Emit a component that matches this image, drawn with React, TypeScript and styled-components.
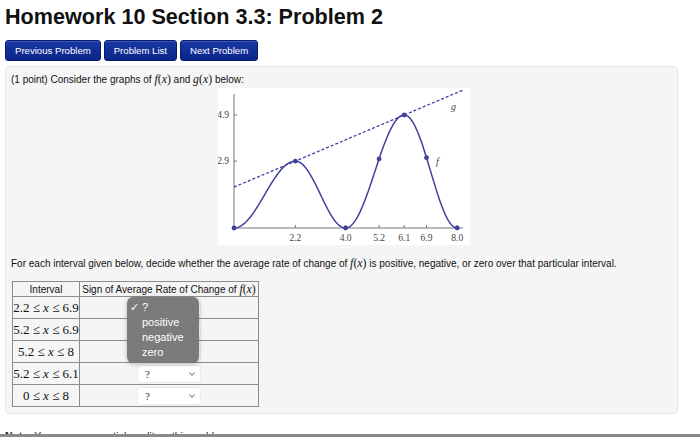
import React from 'react'
import styled, { createGlobalStyle } from 'styled-components'
import { ChevronDown } from 'lucide-react'

const GlobalStyle = createGlobalStyle`
	html, body {
		margin: 0;
		padding: 0;
		background: #ffffff;
		font-family: "Liberation Sans", Helvetica, Arial, sans-serif;
		color: #111;
		overflow: hidden;
	}
`

const Page = styled.div`
	padding: 3px 5px 0 5px;
	width: 673px;
`

const Title = styled.h1`
	margin: 0;
	font-size: 21.6px;
	line-height: 27px;
	font-weight: bold;
	color: #111;
`

const NavBar = styled.div`
	display: flex;
	gap: 3px;
	margin-top: 10px;
`

const NavButton = styled.button`
	height: 21px;
	padding: 0 9px;
	border: 1px solid #061b6e;
	border-radius: 3px;
	background: linear-gradient(to bottom, #1a38a4, #0a2589);
	color: #fff;
	font-family: "Liberation Sans", Helvetica, Arial, sans-serif;
	font-size: 9.6px;
	line-height: 19px;
	box-shadow: inset 0 1px 0 rgba(255, 255, 255, 0.15);
`

const ProblemBox = styled.div`
	margin-top: 5px;
	background: #f5f5f5;
	border: 1px solid #e6e6e6;
	border-radius: 4px;
	padding: 5px 6px 6px 5px;
`

const Para = styled.p<{ $gap?: number }>`
	margin: ${(p) => p.$gap ?? 0}px 0 0 0;
	font-size: 10px;
	line-height: 14px;
`

const M = styled.span`
	font-family: "Liberation Serif", "Times New Roman", serif;
	font-size: 1.18em;
`

const I = styled.i`
	font-style: italic;
`

const GraphWrap = styled.div`
	display: flex;
	justify-content: center;
	padding-left: 5px;
	margin-top: 1px;
`

const TableWrap = styled.div`
	position: relative;
	margin-top: 10px;
	margin-left: 1px;
	width: 247px;
`

const Table = styled.table`
	border-collapse: collapse;
	width: 247px;
	font-size: 10px;
`

const HeadCell = styled.th`
	border: 1px solid #8c8c8c;
	height: 14px;
	padding: 0 1px;
	font-weight: normal;
	text-align: center;
	white-space: nowrap;
	line-height: 13px;
`

const IntervalCell = styled.td`
	border: 1px solid #8c8c8c;
	height: 21px;
	width: 66px;
	padding: 0;
	text-align: center;
	white-space: nowrap;
	font-family: "Liberation Serif", "Times New Roman", serif;
	font-size: 13px;
`

const AnswerCell = styled.td`
	border: 1px solid #8c8c8c;
	height: 21px;
	padding: 0;
`

const SelectBox = styled.div`
	width: 64px;
	height: 18px;
	margin: 0 auto;
	box-sizing: border-box;
	background: #fff;
	border: 1px solid #eaeaea;
	border-radius: 3px;
	display: flex;
	align-items: center;
	justify-content: space-between;
	padding: 0 3px 0 7px;
	font-family: "Liberation Serif", "Times New Roman", serif;
	font-size: 11px;
	color: #333;
`

const Menu = styled.div`
	position: absolute;
	left: 115px;
	top: 16px;
	width: 72px;
	height: 66px;
	box-sizing: border-box;
	padding: 3px 0 0 3px;
	background: rgba(118, 118, 118, 0.96);
	border-radius: 6px;
	box-shadow: 0 1px 4px rgba(0, 0, 0, 0.25);
	color: #fff;
	font-size: 11px;
`

const MenuItem = styled.div<{ $checked?: boolean }>`
	display: flex;
	height: 15px;
	line-height: 15px;
	padding-left: ${(p) => (p.$checked ? 0 : 12)}px;
	gap: 3px;
`

const Note = styled.p`
	margin: 16px 0 0 0;
	font-size: 10.4px;
	line-height: 14px;
	color: #222;
`

const BottomBar = styled.div`
	position: fixed;
	left: 0;
	right: 0;
	bottom: 0;
	height: 3px;
	background: #8a8a8a;
`

const X0 = 16
const Y0 = 140
const SX = 27.9
const SY = 23.06
const PURPLE = '#41409e'

const f = (x: number) => {
	if (x <= 2.2) return (2.9 * (1 - Math.cos((Math.PI * x) / 2.2))) / 2
	if (x <= 4) return (2.9 * (1 + Math.cos((Math.PI * (x - 2.2)) / 1.8))) / 2
	if (x <= 6.1) return (4.9 * (1 - Math.cos((Math.PI * (x - 4)) / 2.1))) / 2
	return (4.9 * (1 + Math.cos((Math.PI * (x - 6.1)) / 1.9))) / 2
}
const g = (x: number) => 2.9 + ((x - 2.2) * 2) / 3.9
const px = (x: number) => X0 + x * SX
const py = (y: number) => Y0 - y * SY

const Graph = () => {
	const pts: string[] = []
	for (let i = 0; i <= 320; i++) {
		const x = (8 * i) / 320
		pts.push(`${px(x).toFixed(2)},${py(f(x)).toFixed(2)}`)
	}
	const xTicks = ['2.2', '4.0', '5.2', '6.1', '6.9', '8.0']
	const dots = [0, 2.2, 4, 5.2, 6.1, 6.9, 8]
	return (
		<svg width="252" height="157" viewBox="0 0 252 157" style={{ background: '#fff', display: 'block' }}>
			<line x1={X0} y1={6} x2={X0} y2={Y0} stroke="#777" strokeWidth="1" />
			<line x1={X0} y1={Y0} x2={245} y2={Y0} stroke="#777" strokeWidth="1" />
			{xTicks.map((t) => (
				<g key={t}>
					<line x1={px(+t)} y1={Y0} x2={px(+t)} y2={Y0 - 3} stroke="#777" />
					<text x={px(+t)} y={153} fontSize="9.5" fill="#444" textAnchor="middle" fontFamily="Liberation Serif, serif">
						{t}
					</text>
				</g>
			))}
			{['4.9', '2.9'].map((t) => (
				<g key={t}>
					<line x1={X0} y1={py(+t)} x2={X0 + 3} y2={py(+t)} stroke="#777" />
					<text x={11} y={py(+t) + 3} fontSize="9.5" fill="#444" textAnchor="end" fontFamily="Liberation Serif, serif">
						{t}
					</text>
				</g>
			))}
			<line x1={px(0)} y1={py(g(0))} x2={px(8.2)} y2={py(g(8.2))} stroke={PURPLE} strokeWidth="1.3" strokeDasharray="3 2" />
			<polyline points={pts.join(' ')} fill="none" stroke={PURPLE} strokeWidth="1.5" />
			{dots.map((d) => (
				<circle key={d} cx={px(d)} cy={py(f(d))} r="2.4" fill={PURPLE} />
			))}
			<text x={233} y={22} fontSize="10" fontStyle="italic" fill="#444" fontFamily="Liberation Serif, serif">
				g
			</text>
			<text x={218} y={77} fontSize="10" fontStyle="italic" fill="#444" fontFamily="Liberation Serif, serif">
				f
			</text>
		</svg>
	)
}

const rows: [string, string][] = [
	['2.2', '6.9'],
	['5.2', '6.9'],
	['5.2', '8'],
	['5.2', '6.1'],
	['0', '8'],
]

const App = () => {
	return (
		<>
			<GlobalStyle />
			<Page>
				<Title>Homework 10 Section 3.3: Problem 2</Title>
				<NavBar>
					<NavButton>Previous Problem</NavButton>
					<NavButton>Problem List</NavButton>
					<NavButton>Next Problem</NavButton>
				</NavBar>
				<ProblemBox>
					<Para>
						(1 point) Consider the graphs of{' '}
						<M>
							<I>f</I>(<I>x</I>)
						</M>{' '}
						and{' '}
						<M>
							<I>g</I>(<I>x</I>)
						</M>{' '}
						below:
					</Para>
					<GraphWrap>
						<Graph />
					</GraphWrap>
					<Para $gap={11}>
						For each interval given below, decide whether the average rate of change of{' '}
						<M>
							<I>f</I>(<I>x</I>)
						</M>{' '}
						is positive, negative, or zero over that particular interval.
					</Para>
					<TableWrap>
						<Table>
							<thead>
								<tr>
									<HeadCell>Interval</HeadCell>
									<HeadCell>
										Sign of Average Rate of Change of{' '}
										<M>
											<I>f</I>(<I>x</I>)
										</M>
									</HeadCell>
								</tr>
							</thead>
							<tbody>
								{rows.map(([a, b]) => (
									<tr key={a + b}>
										<IntervalCell>
											{a} ≤ <I>x</I> ≤ {b}
										</IntervalCell>
										<AnswerCell>
											<SelectBox>
												?
												<ChevronDown size={10} strokeWidth={2.5} color="#777" />
											</SelectBox>
										</AnswerCell>
									</tr>
								))}
							</tbody>
						</Table>
						<Menu>
							<MenuItem $checked>
								<span>✓</span>
								<span>?</span>
							</MenuItem>
							<MenuItem>positive</MenuItem>
							<MenuItem>negative</MenuItem>
							<MenuItem>zero</MenuItem>
						</Menu>
					</TableWrap>
				</ProblemBox>
				<Note>
					<b>Note:</b> You can earn partial credit on this problem.
				</Note>
			</Page>
			<BottomBar />
		</>
	)
}

export default App
